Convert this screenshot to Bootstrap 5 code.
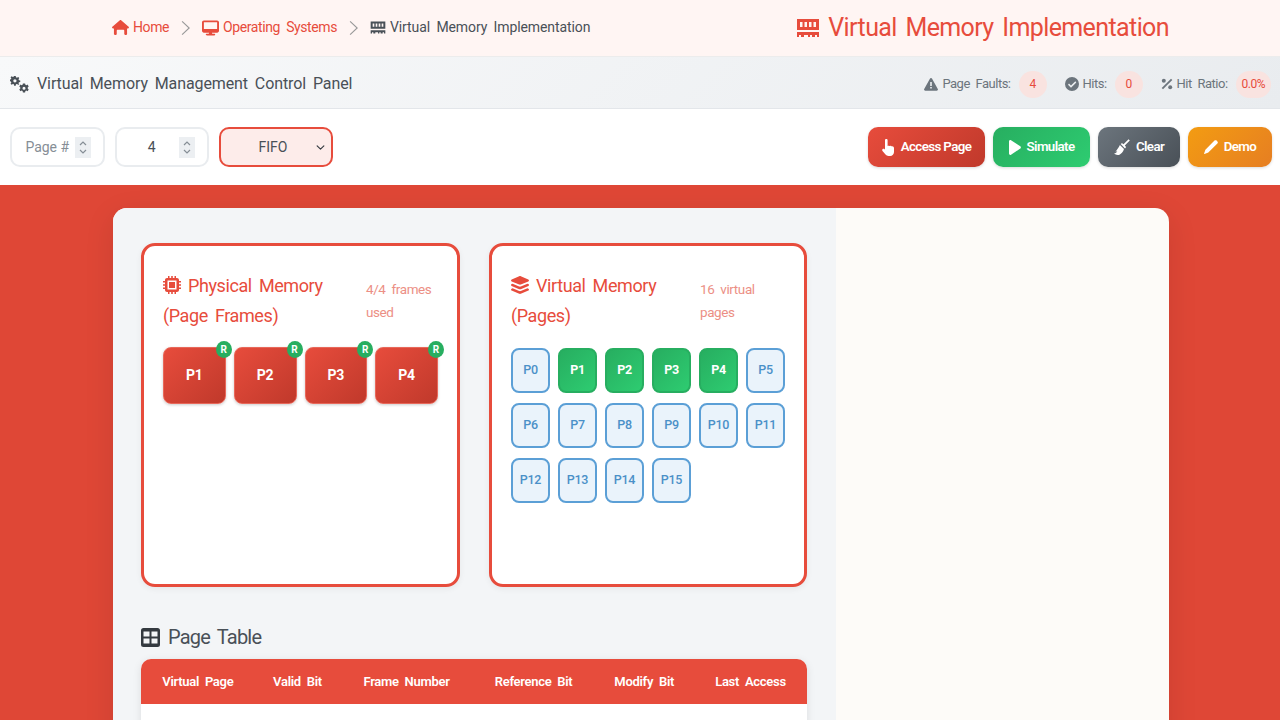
<!DOCTYPE html>
<html lang="en">
<head>
    <meta charset="UTF-8">
    <meta name="viewport" content="width=device-width, initial-scale=1.0">
    <link rel="stylesheet" href="https://cdn.jsdelivr.net/npm/bootstrap@5.3.3/dist/css/bootstrap.min.css">
    <title>Virtual Memory Implementation</title>
    <style>
        html, body { height: 720px; overflow: hidden; }
        body { font-family: Roboto, "Noto Sans", sans-serif; letter-spacing: -.1px; word-spacing: 3px; background: #df4736; color: #2c3e50; }
        svg { fill: currentColor; flex: none; }
        .vm-red { color: #e74c3c; }
        .top-bar { height: 57px; background: #fff5f3; border-bottom: 1px solid #ececec; padding: 0 111px 1px 112px; }
        .crumbs { font-size: 14px; gap: 11px; color: #495057; }
        .crumbs .vm-red { letter-spacing: -.4px; }
        .crumbs .sep { color: #999; margin: 0 0 0 1px; }
        .top-title { font-size: 25px; letter-spacing: -.6px; color: #e74c3c; font-weight: 400; margin: 0; }
        .panel-head { height: 52px; background: linear-gradient(135deg, #f8f9fa, #e9ecef); border-bottom: 1px solid #e3e6ea; padding: 3px 9px 0 10px; }
        .panel-title { font-size: 16px; color: #495057; font-weight: 400; margin: 0; }
        .stats { font-size: 13px; letter-spacing: -.5px; color: #6c757d; gap: 18px; }
        .stat-badge { background: #f9e3e0; color: #e74c3c; font-size: 12px; padding: 0 6px; min-width: 28px; height: 27px; border-radius: 14px; }
        .ctrl-bar { height: 76px; background: #fff; padding: 0 8px 0 10px; }
        .ctrl-group { gap: 10px; }
        .ctrl-input { width: 94.5px; height: 40px; border: 2px solid #e9ecef; border-radius: 10px; text-align: center; font-family: Roboto, sans-serif; font-size: 14px; color: #495057; }
        .ctrl-input::-webkit-inner-spin-button {
            -webkit-appearance: none; appearance: none; opacity: 1; width: 16px; height: 21px; margin-left: 4px;
            background: #eceff2 url("data:image/svg+xml,%3csvg xmlns='http://www.w3.org/2000/svg' viewBox='0 0 16 21'%3e%3cpath fill='none' stroke='%23868e96' stroke-width='1.2' d='M5 8l3-3 3 3M5 13l3 3 3-3'/%3e%3c/svg%3e") center / 16px 21px no-repeat;
        }
        .ctrl-input::placeholder { color: #868e96; }
        .ctrl-select { width: 114px; height: 40px; border: 2px solid #e74c3c; border-radius: 10px; background-color: #fdecea; background-size: 11px 9px; text-align: center; font-family: Roboto, sans-serif; font-size: 14px; color: #495057; padding: 0 14px 0 8px; background-position: right 5px center; }
        .act-btn { height: 40px; border: 0; border-radius: 10px; color: #fff; font-size: 13.3px; letter-spacing: -.6px; font-weight: 600; padding: 0 6px; gap: 6px; white-space: nowrap; word-spacing: 0; box-shadow: 0 1px 3px rgba(0,0,0,.15); }
        .btn-access { width: 117px; background: linear-gradient(135deg, #e74c3c, #c0392b); }
        .btn-sim { width: 97px; background: linear-gradient(135deg, #27ae60, #2ecc71); }
        .btn-clear { width: 82px; background: linear-gradient(135deg, #6c757d, #495057); }
        .btn-demo { width: 84px; background: linear-gradient(135deg, #f39c12, #e67e22); }
        .stage { padding: 23px 111px 0 113px; }
        .shell { background: #fdfbf8; border-radius: 14px 14px 0 0; height: 600px; box-shadow: 0 8px 30px rgba(0,0,0,.1); overflow: hidden; }
        .main-col { width: 723px; background: #f3f5f7; padding: 35px 29px 0 28px; }
        .mem-card { width: 319px; height: 344px; border: 3px solid #e74c3c; border-radius: 14px; background: #fff; padding: 25px 19px; box-shadow: 0 2px 6px rgba(0,0,0,.06); }
        .mem-card + .mem-card { width: 318px; }
        .mem-title { font-size: 18px; letter-spacing: -.4px; line-height: 30px; color: #e74c3c; font-weight: 400; margin: 0; }
        .mem-title svg { margin-right: 7px; vertical-align: -2px; }
        .mem-sub { font-size: 13.5px; letter-spacing: -.4px; line-height: 23px; color: #ec8f85; padding-top: 7px; }
        .frames { display: grid; grid-template-columns: repeat(4, 1fr); gap: 8px; margin-top: 16px; }
        .frame { position: relative; height: 57px; border-radius: 8px; border: 1px solid #e8685a; background: linear-gradient(135deg, #e74c3c, #c0392b); color: #fff; font-size: 14px; font-weight: 700; box-shadow: 0 1px 3px rgba(0,0,0,.2); }
        .ref-badge { position: absolute; top: -7px; right: -7px; width: 16px; height: 17px; border-radius: 50%; background: #27ae60; color: #fff; font-size: 10px; font-weight: 700; }
        .pages { display: grid; grid-template-columns: repeat(6, 1fr); gap: 10px 8px; margin-top: 17px; }
        .vpage { height: 45px; border: 2px solid #5b9fd6; border-radius: 8px; background: #eaf3fb; color: #4a90c8; font-size: 12.5px; letter-spacing: -.3px; font-weight: 500; }
        .vpage.on { border-color: #27ae60; background: linear-gradient(135deg, #27ae60, #2ecc71); color: #fff; font-weight: 700; }
        .table-head { font-size: 20px; letter-spacing: -.8px; color: #495057; font-weight: 400; margin: 38px 0 10px; gap: 8px; }
        .table-head svg { color: #343a40; }
        .page-table { border-radius: 10px 10px 0 0; overflow: hidden; background: #fff; height: 70px; box-shadow: 0 2px 8px rgba(0,0,0,.1); }
        .page-table table { width: 100%; margin: 0; }
        .page-table th { background: #e74c3c; color: #fff; font-size: 13px; letter-spacing: -.3px; font-weight: 600; text-align: center; height: 45px; padding: 0 10px; border: 0; white-space: nowrap; vertical-align: middle; }
    </style>
</head>
<body>
    <header class="top-bar d-flex align-items-center justify-content-between">
        <nav class="crumbs d-flex align-items-center">
            <span class="d-flex align-items-center gap-1 vm-red">
                <svg width="17" height="15" viewBox="0 0 576 512"><path d="M575.8 255.5c0 18-15 32.1-32 32.1h-32l.7 160.2V480c0 17.700-14.300 32-32 32H448c-17.700 0-32-14.300-32-32V368c0-17.700-14.300-32-32-32H192c-17.700 0-32 14.300-32 32v112c0 17.700-14.300 32-32 32H96c-17.700 0-32-14.300-32-32V287.600H32c-18 0-32-14-32-32.100 0-9 3-17 10-24L266.400 8c7-7 15-8 22-8s15 2 21 7l255.400 224.500c8 7 12 15 11 24z"/></svg>
                Home
            </span>
            <svg class="sep" width="10" height="16" viewBox="0 0 10 16"><path d="M1.500 1 9 8l-7.500 7-.8-.8L7.300 8 .7 1.800z"/></svg>
            <span class="d-flex align-items-center gap-1 vm-red">
                <svg width="17" height="16" viewBox="0 0 576 512"><path d="M64 0C28.700 0 0 28.700 0 64v288c0 35.300 28.700 64 64 64h176l-10.700 32H160c-17.700 0-32 14.300-32 32s14.300 32 32 32h256c17.700 0 32-14.300 32-32s-14.300-32-32-32h-69.300L336 416h176c35.300 0 64-28.700 64-64V64c0-35.300-28.700-64-64-64H64zm448 64v224H64V64h448z"/></svg>
                Operating Systems
            </span>
            <svg class="sep" width="10" height="16" viewBox="0 0 10 16"><path d="M1.500 1 9 8l-7.500 7-.8-.8L7.300 8 .7 1.800z"/></svg>
            <span class="d-flex align-items-center gap-1">
                <svg width="16" height="13" viewBox="0 0 24 18"><path fill-rule="evenodd" d="M1 0h22v11H1zM4 3v5h2.500V3zm4.500 0v5H11V3zM13 3v5h2.500V3zm4.500 0v5H20V3zM1 13h22v5h-2v-2h-2v2h-3v-2h-2v2h-2v-2H8v2H5v-2H3v2H1z"/></svg>
                Virtual Memory Implementation
            </span>
        </nav>
        <h1 class="top-title d-flex align-items-center gap-2">
            <svg width="24" height="18" viewBox="0 0 24 18"><path fill-rule="evenodd" d="M1 0h22v11H1zM4 3v5h2.500V3zm4.500 0v5H11V3zM13 3v5h2.500V3zm4.500 0v5H20V3zM1 13h22v5h-2v-2h-2v2h-3v-2h-2v2h-2v-2H8v2H5v-2H3v2H1z"/></svg>
            Virtual Memory Implementation
        </h1>
    </header>

    <section class="panel-head d-flex align-items-center justify-content-between">
        <h2 class="panel-title d-flex align-items-center gap-2">
            <svg width="19" height="17" viewBox="0 0 19 17"><path fill-rule="evenodd" d="M5 0h2l.3 1.600 1.200.5L10 1.200l1.300 1.300-.9 1.400.5 1.200 1.600.3v2l-1.600.3-.5 1.200.9 1.400L10 10.600l-1.500-.9-1.200.5L7 11.800H5l-.3-1.600-1.200-.5-1.500.9L.7 9.300l.9-1.400-.5-1.200L-.5 6.400v-2l1.600-.3.5-1.200-.9-1.400L2 .2l1.500.9 1.200-.5zM6 3.900a2 2 0 1 0 0 4 2 2 0 0 0 0-4z" transform="scale(.82)"/><path fill-rule="evenodd" d="M12.900 7.500h2.200l.3 1.300 1 .5 1.200-.7 1.100 1.900-1 .9v1.100l1 .9-1.100 1.900-1.200-.7-1 .5-.3 1.400h-2.200l-.3-1.400-1-.5-1.200.7-1.100-1.900 1-.9v-1.100l-1-.9 1.100-1.900 1.200.7 1-.5zM14 10.700a1.500 1.500 0 1 0 0 3 1.500 1.500 0 0 0 0-3z"/></svg>
            Virtual Memory Management Control Panel
        </h2>
        <div class="stats d-flex align-items-center">
            <span class="d-flex align-items-center gap-1">
                <svg width="14" height="13" viewBox="0 0 14 13"><path fill-rule="evenodd" d="M7 0c.5 0 .9.300 1.100.7l5.700 10.300c.4.800-.1 1.800-1.100 1.800H1.300c-1 0-1.500-1-1.100-1.800L5.900.7C6.100.300 6.500 0 7 0zM6.200 4v4h1.600V4zm0 5v1.600h1.600V9z"/></svg>
                Page Faults:
                <span class="stat-badge d-flex align-items-center justify-content-center ms-1">4</span>
            </span>
            <span class="d-flex align-items-center gap-1">
                <svg width="14" height="14" viewBox="0 0 14 14"><path fill-rule="evenodd" d="M7 0a7 7 0 1 1 0 14A7 7 0 0 1 7 0zm3.300 4.300L6 8.500 4 6.600 3 7.700l3 3 5.300-5.300z"/></svg>
                Hits:
                <span class="stat-badge d-flex align-items-center justify-content-center ms-1">0</span>
            </span>
            <span class="d-flex align-items-center gap-1">
                <svg width="12" height="12" viewBox="0 0 12 12"><path d="M10 .7 11.300 2 2 11.300.7 10z"/><circle cx="2.800" cy="2.800" r="2"/><circle cx="9.200" cy="9.200" r="2"/></svg>
                Hit Ratio:
                <span class="stat-badge d-flex align-items-center justify-content-center ms-1">0.0%</span>
            </span>
        </div>
    </section>

    <section class="ctrl-bar d-flex align-items-center justify-content-between">
        <div class="d-flex align-items-center ctrl-group">
            <input type="number" class="form-control ctrl-input" placeholder="Page #">
            <input type="number" class="form-control ctrl-input" value="4">
            <select class="form-select ctrl-select">
                <option>FIFO</option>
                <option>LRU</option>
                <option>Optimal</option>
            </select>
        </div>
        <div class="d-flex gap-2 align-items-center">
            <button class="btn act-btn btn-access d-flex align-items-center justify-content-center">
                <svg width="13" height="17" viewBox="0 0 13 17"><path d="M3 1.200a1.300 1.300 0 0 1 2.600 0V7l.6-.2c.5-.2 1-.1 1.300.2l.7-.1c.5-.1 1 .1 1.200.4l.8-.1c1.100 0 1.800.8 1.800 1.900V13c0 2.200-1.600 4-3.800 4H6.500c-1.200 0-2.300-.5-3-1.400L.5 11.900c-.5-.6-.4-1.400.2-1.900.5-.4 1.300-.4 1.800.1L3 10.700z"/></svg>
                Access Page
            </button>
            <button class="btn act-btn btn-sim d-flex align-items-center justify-content-center">
                <svg width="12" height="15" viewBox="0 0 12 15"><path d="M0 1.500C0 .4 1.100-.3 2 .3l9.300 6c.8.500.8 1.800 0 2.300L2 14.700c-.9.600-2-.1-2-1.200z"/></svg>
                Simulate
            </button>
            <button class="btn act-btn btn-clear d-flex align-items-center justify-content-center">
                <svg width="16" height="16" viewBox="0 0 16 16"><path d="M14.600.2l1.200 1.200-5 5.200.9 1c.3.300.3.800 0 1.100l-.7.700-4.300-4.300.7-.7c.3-.3.800-.3 1.100 0l1 .9zM5.900 6 10 10.100C9.300 13 7 15 5 16c-1.500 0-3.500-.3-5-1.200 1.600-.5 2.800-1.500 3.300-2.800l-2 1C2.800 11.300 4.600 8.700 5.900 6z"/></svg>
                Clear
            </button>
            <button class="btn act-btn btn-demo d-flex align-items-center justify-content-center">
                <svg width="14" height="14" viewBox="0 0 14 14"><path d="M10.500.6c.6-.6 1.500-.6 2.100 0l.8.800c.6.600.6 1.500 0 2.100L4.300 12.600.5 13.900c-.3.100-.5-.1-.4-.4l1.300-3.800z"/></svg>
                Demo
            </button>
        </div>
    </section>

    <main class="stage">
        <div class="shell d-flex">
            <div class="main-col">
                <div class="d-flex justify-content-between">
                    <div class="mem-card">
                        <div class="d-flex justify-content-between">
                            <h3 class="mem-title" style="width: 200px">
                                <svg width="18" height="18" viewBox="0 0 18 18"><path fill-rule="evenodd" d="M5 0h1.500v2h1.700V0h1.600v2h1.700V0H13v2h1c1.100 0 2 .9 2 2v1h2v1.500h-2v1.700h2v1.600h-2v1.700h2V13h-2v1c0 1.100-.9 2-2 2h-1v2h-1.500v-2H9.800v2H8.200v-2H6.500v2H5v-2H4c-1.100 0-2-.9-2-2v-1H0v-1.500h2V9.800H0V8.200h2V6.500H0V5h2V4c0-1.100.9-2 2-2h1zM4.500 4.500v9h9v-9zM6 6h6v6H6z"/></svg>Physical Memory (Page Frames)
                            </h3>
                            <div class="mem-sub" style="width: 72px">4/4 frames used</div>
                        </div>
                        <div class="frames" id="frames"></div>
                    </div>
                    <div class="mem-card">
                        <div class="d-flex justify-content-between">
                            <h3 class="mem-title" style="width: 185px">
                                <svg width="18" height="18" viewBox="0 0 18 18"><path d="M8.200.2c.5-.2 1.100-.2 1.600 0l7.500 3.200c.9.400.9 1.600 0 2L9.800 8.600c-.5.2-1.100.2-1.600 0L.7 5.400c-.9-.4-.9-1.600 0-2zM1.600 7.700l6.600 2.800c.5.200 1.100.200 1.600 0l6.600-2.800 1 .4c.8.400.8 1.500 0 1.800l-7.600 3.300c-.5.200-1.100.200-1.600 0L.6 9.900c-.8-.3-.8-1.400 0-1.800zm0 4.600 6.600 2.800c.5.200 1.100.200 1.600 0l6.600-2.800 1 .4c.8.400.8 1.500 0 1.800l-7.600 3.300c-.5.200-1.100.200-1.600 0L.6 14.500c-.8-.3-.8-1.400 0-1.800z"/></svg>Virtual Memory (Pages)
                            </h3>
                            <div class="mem-sub" style="width: 85px">16 virtual pages</div>
                        </div>
                        <div class="pages" id="pages"></div>
                    </div>
                </div>
                <h3 class="table-head d-flex align-items-center">
                    <svg width="19" height="19" viewBox="0 0 19 19"><path fill-rule="evenodd" d="M2.500 0h14A2.500 2.500 0 0 1 19 2.500v14a2.500 2.500 0 0 1-2.500 2.500h-14A2.500 2.500 0 0 1 0 16.500v-14A2.500 2.500 0 0 1 2.500 0zM2.500 3.500v5h6v-5zm8 0v5h6v-5zm-8 7v5h6v-5zm8 0v5h6v-5z"/></svg>
                    Page Table
                </h3>
                <div class="page-table">
                    <table class="table">
                        <thead>
                            <tr>
                                <th>Virtual Page</th>
                                <th>Valid Bit</th>
                                <th>Frame Number</th>
                                <th>Reference Bit</th>
                                <th>Modify Bit</th>
                                <th>Last Access</th>
                            </tr>
                        </thead>
                    </table>
                </div>
            </div>
        </div>
    </main>

    <script>
        const frames = ['P1', 'P2', 'P3', 'P4'];
        document.getElementById('frames').innerHTML = frames.map(p =>
            `<div class="frame d-flex align-items-center justify-content-center">${p}<span class="ref-badge d-flex align-items-center justify-content-center">R</span></div>`
        ).join('');

        let pagesHtml = '';
        for (let i = 0; i < 16; i++) {
            const on = i >= 1 && i <= 4 ? ' on' : '';
            pagesHtml += `<div class="vpage${on} d-flex align-items-center justify-content-center">P${i}</div>`;
        }
        document.getElementById('pages').innerHTML = pagesHtml;
    </script>
    <script src="https://cdn.jsdelivr.net/npm/bootstrap@5.3.3/dist/js/bootstrap.bundle.min.js"></script>
</body>
</html>
